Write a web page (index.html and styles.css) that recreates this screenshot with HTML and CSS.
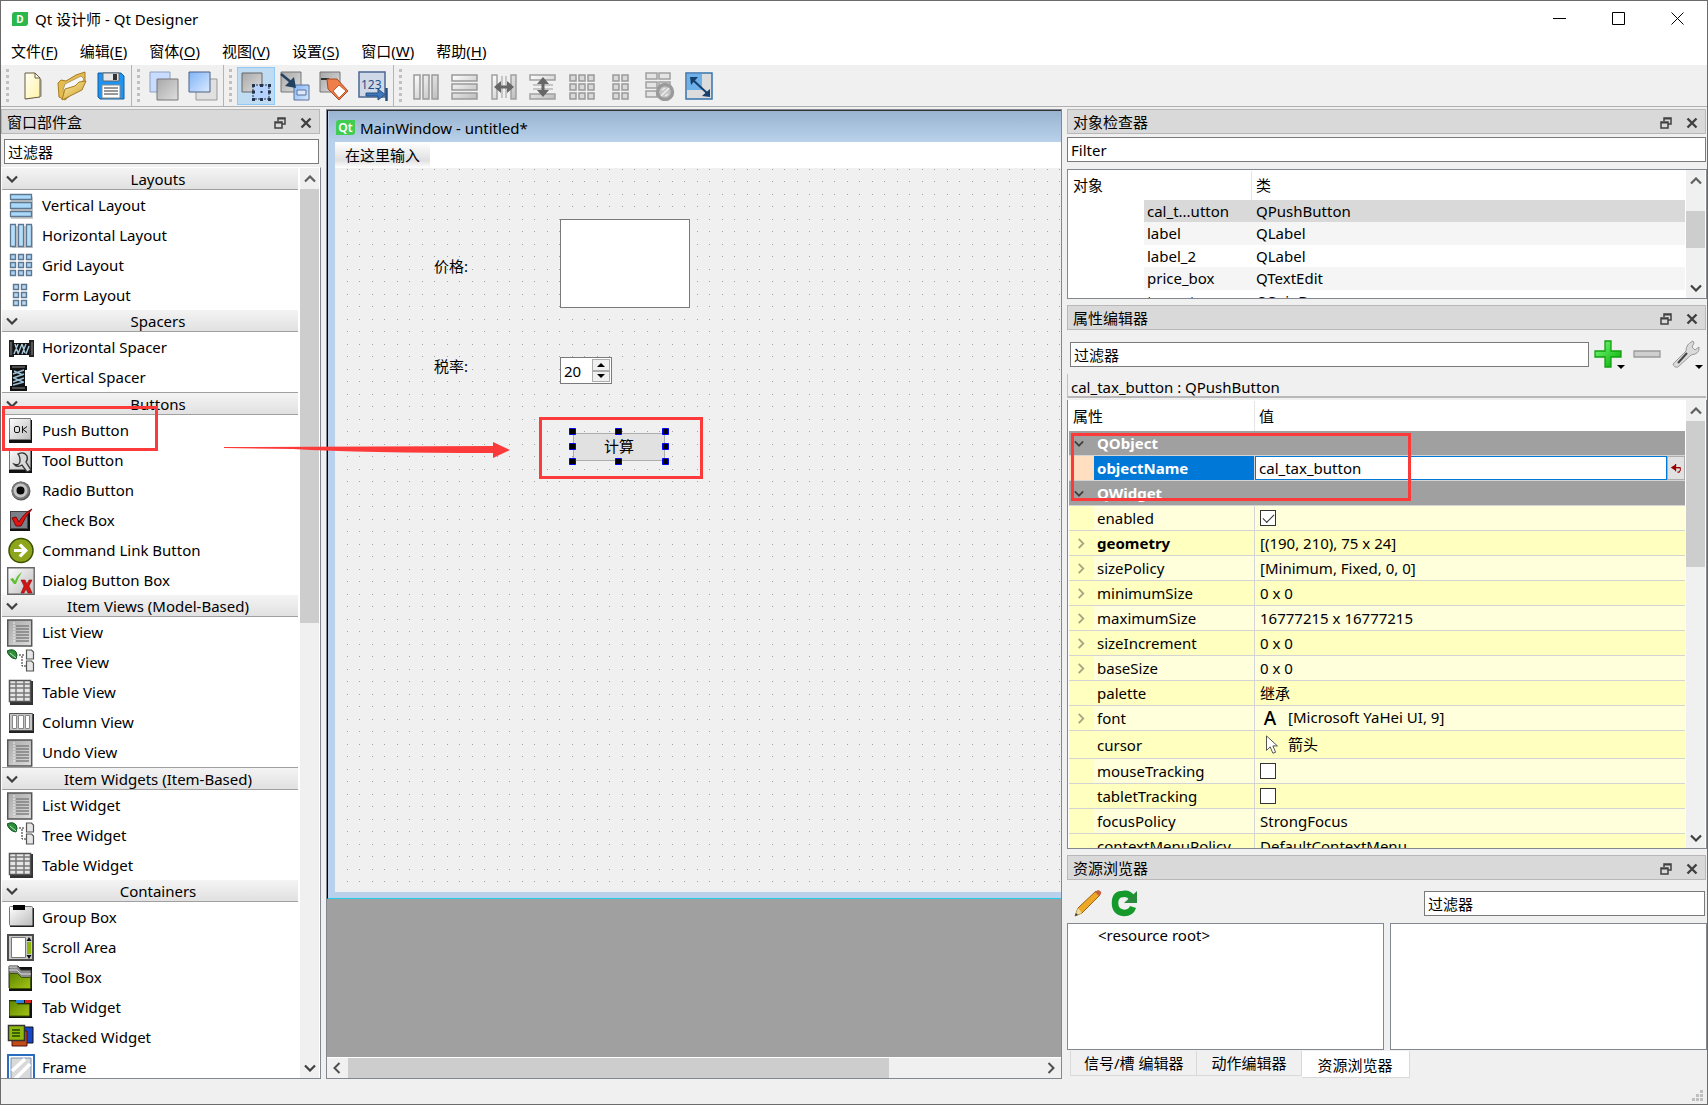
FILE: index.html
```html
<!DOCTYPE html>
<html lang="zh-CN">

<head>
    <meta charset="UTF-8">
    <title>Qt 设计师 - Qt Designer</title>
    <link rel="stylesheet" href="styles.css">
</head>

<body>
    <!-- Shared icon symbols -->
    <svg class="sprite" aria-hidden="true">
        <defs>
            <linearGradient id="g-blue" x1="0" y1="0" x2="1" y2="1">
                <stop offset="0" stop-color="#7fb4f7" />
                <stop offset="1" stop-color="#dbe9ff" />
            </linearGradient>
            <linearGradient id="g-grey" x1="0" y1="0" x2="1" y2="1">
                <stop offset="0" stop-color="#a8a8a8" />
                <stop offset="1" stop-color="#dedede" />
            </linearGradient>
            <linearGradient id="g-light" x1="0" y1="0" x2="1" y2="1">
                <stop offset="0" stop-color="#fdfdfd" />
                <stop offset="1" stop-color="#bdbdbd" />
            </linearGradient>
            <linearGradient id="g-green" x1="0" y1="0" x2="1" y2="1">
                <stop offset="0" stop-color="#5f8500" />
                <stop offset="1" stop-color="#a3c516" />
            </linearGradient>
            <linearGradient id="g-plus" x1="0" y1="0" x2="1" y2="1">
                <stop offset="0" stop-color="#7dff7d" />
                <stop offset="1" stop-color="#00a800" />
            </linearGradient>
            <linearGradient id="g-gold" x1="0" y1="0" x2="1" y2="1">
                <stop offset="0" stop-color="#fff0a0" />
                <stop offset="1" stop-color="#c99a2c" />
            </linearGradient>
            <linearGradient id="g-paper" x1="0" y1="0" x2="1" y2="1">
                <stop offset="0" stop-color="#fffff4" />
                <stop offset="1" stop-color="#fff3a6" />
            </linearGradient>
        </defs>
        <symbol id="chev-down" viewBox="0 0 12 8"><path d="M1 1.5l5 5 5-5" fill="none" stroke="#404040" stroke-width="2.2" /></symbol>
        <symbol id="chev-up" viewBox="0 0 12 8"><path d="M1 6.5l5-5 5 5" fill="none" stroke="#606060" stroke-width="2.2" /></symbol>
        <symbol id="chev-left" viewBox="0 0 8 12"><path d="M6.5 1l-5 5 5 5" fill="none" stroke="#505050" stroke-width="2" /></symbol>
        <symbol id="chev-right" viewBox="0 0 8 12"><path d="M1.5 1l5 5-5 5" fill="none" stroke="#505050" stroke-width="2" /></symbol>
        <symbol id="float" viewBox="0 0 12 12"><path d="M4 4V1h7v6H8M4 1.8h7M1 5h7v6H1zM1 5.8h7" fill="none" stroke="#404040" stroke-width="1.5" /></symbol>
        <symbol id="close" viewBox="0 0 12 12"><path d="M1.5 1.5l9 9M10.5 1.5l-9 9" stroke="#404040" stroke-width="2.4" /></symbol>

        <!-- toolbar -->
        <symbol id="new" viewBox="0 0 30 30"><path d="M8 3h10l6 6v16.500L8 28.500z" fill="#b9b9b9" /><path d="M7 2h10l5 5v19L7 28z" fill="url(#g-paper)" stroke="#6a5a3c" /><path d="M17 2v5h5z" fill="#fff" stroke="#6a5a3c" /></symbol>
        <symbol id="open" viewBox="0 0 30 30"><path d="M1 12l3-3 5 1 10-6 9-3v10L8 29l-6-3z" fill="#e4bb4f" stroke="#a87c22" /><path d="M6 19L8 13l16-8 3 3-5 8-15 7z" fill="#f6f6f6" stroke="#b09a68" /><path d="M5 29l3-11 10-3 4-4 7-1-4 9z" fill="url(#g-gold)" stroke="#a87c22" /></symbol>
        <symbol id="save" viewBox="0 0 30 30"><path d="M2 2h23l3 3v23H4l-2-2z" fill="#1d93f3" stroke="#155f9d" /><path d="M7 2h16v8H7z" fill="#e6e6e6" stroke="#666" /><path d="M17 3h4v6h-4z" fill="#333" /><path d="M6 14h18v13H6z" fill="#fff" stroke="#888" /><path d="M8 17h14M8 20h14M8 23h14" stroke="#777" stroke-width="1.300" /></symbol>
        <symbol id="back" viewBox="0 0 30 30"><path d="M1 1h20v20H1z" fill="#c8dcff" stroke="#8fa0bf" /><path d="M8 8h21v21H8z" fill="url(#g-grey)" stroke="#777" /></symbol>
        <symbol id="front" viewBox="0 0 30 30"><path d="M8 8h21v21H8z" fill="#e0e0e0" stroke="#999" /><path d="M1 1h21v20H1z" fill="url(#g-blue)" stroke="#4d6185" /></symbol>
        <symbol id="edit-widget" viewBox="0 0 30 30"><path d="M1 2h20v19H1z" fill="url(#g-grey)" stroke="#666" /><path d="M12 14h16v14H12z" fill="#b4d2fb" stroke="#24344f" stroke-dasharray="2 1" /><path d="M11 13h3v3h-3zM19 13h3v3h-3zM27 13h3v3h-3zM11 19.500h3v3h-3zM27 19.500h3v3h-3zM11 27h3v3h-3zM19 27h3v3h-3zM27 27h3v3h-3zM19.500 20h2v2h-2z" fill="#24344f" /></symbol>
        <symbol id="edit-signal" viewBox="0 0 30 30"><path d="M1 1h20v20H1z" fill="url(#g-grey)" stroke="#777" /><path d="M14 14h15v15H14z" fill="url(#g-blue)" stroke="#5b7396" /><path d="M17 19h9v5h-9z" fill="#dce8fa" stroke="#5b7396" /><path d="M1 3l11 9" stroke="#23405f" stroke-width="2.500" /><path d="M14 6l2 11-11-2z" fill="#23405f" /></symbol>
        <symbol id="edit-buddy" viewBox="0 0 30 30"><path d="M1 1h20v20H1z" fill="url(#g-grey)" stroke="#777" /><path d="M2 8h8" stroke="#333" stroke-width="2" /><path d="M8 8h10l11 12-9 9L9 18z" fill="#ef7f4a" stroke="#a54a22" /><path d="M20 14l7 6-7 7-6-7z" fill="#fff" stroke="#c95a24" /></symbol>
        <symbol id="lay-h" viewBox="0 0 30 30"><path d="M3 4h6v24H3zM12 4h6v24h-6zM21 4h6v24h-6z" fill="url(#g-light)" stroke="#9a9a9a" stroke-width="1.500" /></symbol>
        <symbol id="lay-v" viewBox="0 0 30 30"><path d="M2 4h25v6H2zM2 13h25v6H2zM2 22h25v6H2z" fill="url(#g-light)" stroke="#9a9a9a" stroke-width="1.500" /></symbol>
        <symbol id="split-h" viewBox="0 0 30 30"><path d="M3 4h5v24H3zM22 4h5v24h-5z" fill="url(#g-light)" stroke="#a0a0a0" stroke-width="1.500" /><path d="M13 5v22M17 5v22" stroke="#999" /><path d="M10 16h10" stroke="#666" stroke-width="3" /><path d="M12 10v12l-7-6zM18 10v12l7-6z" fill="#666" /></symbol>
        <symbol id="split-v" viewBox="0 0 30 30"><path d="M2 4h25v5H2zM2 23h25v5H2z" fill="url(#g-light)" stroke="#a0a0a0" stroke-width="1.500" /><path d="M5 14h20M5 18h20" stroke="#999" /><path d="M15 11v10" stroke="#666" stroke-width="3" /><path d="M9 13h12l-6-7zM9 19h12l-6 7z" fill="#666" /></symbol>
        <symbol id="lay-grid" viewBox="0 0 30 30"><path d="M3 4h6v6H3zM12 4h6v6h-6zM21 4h6v6h-6zM3 13h6v6H3zM12 13h6v6h-6zM21 13h6v6h-6zM3 22h6v6H3zM12 22h6v6h-6zM21 22h6v6h-6z" fill="#d9d9d9" stroke="#999" stroke-width="1.500" /></symbol>
        <symbol id="lay-form" viewBox="0 0 30 30"><path d="M7 4h6v6H7zM16 4h6v6h-6zM7 13h6v6H7zM16 13h6v6h-6zM7 22h6v6H7zM16 22h6v6h-6z" fill="#d9d9d9" stroke="#999" stroke-width="1.500" /></symbol>
        <symbol id="break" viewBox="0 0 30 30"><path d="M1 2h11v6H1zM14 2h11v6H14zM1 11h11v6H1zM14 11h11v6H14zM1 20h11v6H1z" fill="#e4e4e4" stroke="#a0a0a0" stroke-width="1.500" /><circle cx="20" cy="21" r="7.500" fill="#c4c4c4" stroke="#9a9a9a" stroke-width="3.500" /><path d="M16 25l8-8M17 19l3-2M20 25l3-2" stroke="#eee" stroke-width="1.500" /></symbol>
        <symbol id="adjust" viewBox="0 0 30 30"><path d="M2 2h26v26H2z" fill="#dcdcdc" stroke="#3573b1" stroke-width="1.500" /><path d="M3 3h15v16H3z" fill="#6db1ea" /><path d="M10 10l13 12" stroke="#17406d" stroke-width="2" /><path d="M6 6h8l-7 8zM26 26v-8l-8 7z" fill="#17406d" /></symbol>

        <!-- widget box -->
        <symbol id="w-vlay" viewBox="0 0 28 28"><path d="M4 5h22v22H4z" fill="#ccc" /><path d="M3.500 2.500h21v5h-21zM3.500 10.500h21v6h-21zM3.500 19.500h21v5h-21z" fill="#a9d9fb" stroke="#5d7791" stroke-width="1.300" /></symbol>
        <symbol id="w-hlay" viewBox="0 0 28 28"><path d="M5 4h21v22H5z" fill="#ccc" /><path d="M3.500 2.500h5v22h-5zM11.500 2.500h5v22h-5zM19.500 2.500h5v22h-5z" fill="#b5defb" stroke="#5d7791" stroke-width="1.300" /></symbol>
        <symbol id="w-grid" viewBox="0 0 28 28"><path d="M3.500 2.500h5v5h-5zM11.500 2.500h5v5h-5zM19.500 2.500h5v5h-5zM3.500 10.500h5v5h-5zM11.500 10.500h5v5h-5zM19.500 10.500h5v5h-5zM3.500 18.500h5v5h-5zM11.500 18.500h5v5h-5zM19.500 18.500h5v5h-5z" fill="#a9d2f5" stroke="#5d7791" stroke-width="1.400" /></symbol>
        <symbol id="w-form" viewBox="0 0 28 28"><path d="M6.500 2.500h5v5h-5zM14.500 2.500h5v5h-5zM6.500 10.500h5v5h-5zM14.500 10.500h5v5h-5zM6.500 18.500h5v5h-5zM14.500 18.500h5v5h-5z" fill="#b9d9f2" stroke="#5d7791" stroke-width="1.400" /></symbol>
        <symbol id="w-hspace" viewBox="0 0 28 28"><path d="M2 6h5v17H2zM22 6h5v17h-5z" fill="#222" /><path d="M6 9h16v12H6z" fill="#111" /><path d="M7 20l4-10M11 20l4-10M15 20l4-10M19 20l3-8M8 10l3 9M15 10l3 9" stroke="#a9c9dc" stroke-width="1.400" /><path d="M4 8v13M25 8v13" stroke="#8a8a8a" /></symbol>
        <symbol id="w-vspace" viewBox="0 0 28 28"><path d="M3 1h17v5H3zM3 22h17v5H3z" fill="#111" /><path d="M5 6h13v16H5z" fill="#111" /><path d="M6 10l11-4M6 14l11-4M6 18l11-4M6 21l11-3M7 7l9 4M7 14l9 4" stroke="#9cc0d6" stroke-width="1.400" /><path d="M5 3h13M5 24h13" stroke="#8a8a8a" /></symbol>
        <symbol id="w-push" viewBox="0 0 28 28"><path d="M2 3h23v23H2z" fill="#111" /><path d="M2.500 1.500h21v21h-21z" fill="url(#g-light)" stroke="#777" /><rect x="7.500" y="9.500" width="5" height="6" rx="1.500" fill="none" stroke="#111" stroke-width="1" /><path d="M15.500 9v7M20 9.500l-4 3 4 3" fill="none" stroke="#111" stroke-width="1" /></symbol>
        <symbol id="w-tool" viewBox="0 0 28 28"><path d="M2 3h23v23H2z" fill="#111" /><path d="M2.500 1.500h21v21h-21z" fill="url(#g-light)" stroke="#777" /><path d="M7 17q6 2 6-3t-2-7q6-3 9 2 1 4-1 6l5 8-4 2-5-7q-5 3-8-1z" fill="#d8d8d8" stroke="#333" stroke-width="1.300" /></symbol>
        <symbol id="w-radio" viewBox="0 0 28 28"><circle cx="14" cy="14" r="9.500" fill="#555" /><circle cx="13.500" cy="13.500" r="8" fill="#c4c4c4" stroke="#777" stroke-width="2" /><circle cx="13.500" cy="13.500" r="4" fill="#080808" /></symbol>
        <symbol id="w-check" viewBox="0 0 28 28"><path d="M3 4h20v20H3z" fill="#111" /><path d="M3.500 4.500h17v17h-17z" fill="#7b7f88" stroke="#444" /><path d="M5 11l4-1 3 5q5-9 13-13-7 8-11 17H9z" fill="#e01616" stroke="#7d0606" /></symbol>
        <symbol id="w-link" viewBox="0 0 28 28"><circle cx="14" cy="13.500" r="12" fill="#8ca51c" stroke="#3c5200" stroke-width="1.500" /><path d="M7 12h8L11.500 8.500l2.500-2 7 7-7 7-2.500-2L15 15H7z" fill="#fff" /></symbol>
        <symbol id="w-dialog" viewBox="0 0 28 28"><path d="M.7.700h26.500v26.500H.7z" fill="url(#g-light)" stroke="#666" stroke-width="1.400" /><path d="M3 12l3-1 2 3q2-6 7-9-4 6-6 12H7z" fill="#61c02e" /><path d="M14 13h4l2 4 2-4h3l-3 6 3 7h-4l-2-4-2 4h-3l3-7z" fill="#d01515" stroke="#8c1010" stroke-width=".6" /></symbol>
        <symbol id="w-list" viewBox="0 0 28 28"><path d="M.7 1h24v26H.7z" fill="url(#g-grey)" stroke="#555" stroke-width="1.500" /><path d="M7 3v22" stroke="#eee" stroke-dasharray="2 1" /><path d="M9 7h13M9 10h13M9 13h13M9 16h13M9 19h13M9 22h13" stroke="#808080" stroke-width="1.300" /></symbol>
        <symbol id="w-tree" viewBox="0 0 28 28"><path d="M0 2q6-3 9 1 2 3 0 7Q2 9 0 2z" fill="#2c8f3a" stroke="#145420" /><path d="M3 4l6 5" stroke="#bfe3bf" /><path d="M12 6h6M15 7v10h4" fill="none" stroke="#222" stroke-dasharray="2 1" /><path d="M19.500 1h5l2 2v7h-7zM19.500 12h5l2 2v8h-7z" fill="#e6e6e6" stroke="#555" stroke-width="1.200" /></symbol>
        <symbol id="w-table" viewBox="0 0 28 28"><path d="M3 2h23v24H3z" fill="#333" /><path d="M2.500 1.500h21v21h-21z" fill="#e5e5e5" stroke="#555" stroke-width="1.500" /><path d="M3 5h20M3 9h20M3 14h20M3 18h20M9 2v20M17 2v20" stroke="#777" stroke-width="1.500" /></symbol>
        <symbol id="w-column" viewBox="0 0 28 28"><path d="M2 5h25v19H2z" fill="#222" /><path d="M2.500 4.500h23v17h-23z" fill="#c4c4c4" stroke="#555" /><path d="M5.500 6.500h4v13h-4zM11.500 6.500h5v13h-5zM18.500 6.500h4v13h-4z" fill="#fff" stroke="#888" /></symbol>
        <symbol id="w-group" viewBox="0 0 28 28"><path d="M3 4h24v19H3z" fill="#222" /><rect x="2.500" y="2.500" width="23" height="19" rx="1" fill="url(#g-light)" stroke="#777" /><path d="M6 1h12v5H6z" fill="#050505" /></symbol>
        <symbol id="w-scroll" viewBox="0 0 28 28"><path d="M1 1h25v25H1z" fill="#c9c9c9" stroke="#4c4c4c" stroke-width="2" /><path d="M4.500 3.500h14v20h-14z" fill="#fff" stroke="#777" /><path d="M20 8h4v12h-4z" fill="#8fb50b" /><path d="M19.500 7l2.500-4 2.500 4zM19.500 21l2.500 4 2.500-4z" fill="#111" /></symbol>
        <symbol id="w-toolbox" viewBox="0 0 28 28"><path d="M2 3h23v24H2z" fill="#111" /><path d="M2 2h9l3 4h10v18H2z" fill="#8a8a8a" stroke="#333" /><path d="M2 6h8l4 4h10M2 3h8" stroke="#ddd" fill="none" /><path d="M2.500 9.500h8l4 4h9v11h-21z" fill="url(#g-green)" stroke="#3e5600" /></symbol>
        <symbol id="w-tab" viewBox="0 0 28 28"><path d="M2 6h23v18H2z" fill="#111" /><path d="M2.500 7h6l2 3h12v12h-20z" fill="url(#g-green)" stroke="#3e5600" /><path d="M9 6h8v3H9z" fill="#2c83e0" /><path d="M18 6h6v3h-6z" fill="#d22" /></symbol>
        <symbol id="w-stack" viewBox="0 0 28 28"><path d="M12 3h14v16H12z" fill="#1646c8" stroke="#111" /><path d="M5 7h15v15H5z" fill="#c34b16" stroke="#511" /><path d="M1.500 1.500h16v15h-16z" fill="#8fb80c" stroke="#333" stroke-width="1.500" /><path d="M5 6h8M5 9h8M5 12h8" stroke="#224400" stroke-width="1.300" /></symbol>
        <symbol id="w-frame" viewBox="0 0 28 28"><path d="M1 1h26v26H1z" fill="#fff" stroke="#2a6cc0" stroke-width="2" /><path d="M4 4h20v22H4z" fill="#d9d9d9" stroke="#7a94b4" /><path d="M5 17L18 5M8 25L23 10" stroke="#fff" stroke-width="3.500" /></symbol>

        <!-- property editor and resource browser -->
        <symbol id="plus" viewBox="0 0 28 28"><path d="M11 1h6v10h10v6H17v10h-6V17H1v-6h10z" fill="url(#g-plus)" stroke="#11a011" stroke-width="1.300" /></symbol>
        <symbol id="minus" viewBox="0 0 28 28"><path d="M1 11h26v6H1z" fill="#cfcfcf" stroke="#9a9a9a" stroke-width="1.300" /></symbol>
        <symbol id="wrench" viewBox="0 0 28 28"><path d="M1 24L14 11q0-7 7-10l1 2-2 4 3 3 4-3q1 7-8 8L6 27q-4 1-5-3z" fill="#dadada" stroke="#999" /><path d="M6 23l9-10" stroke="#444" stroke-width="2" /></symbol>
        <symbol id="pencil" viewBox="0 0 28 28"><path d="M1 27l3-8L22 2l4 4L8 24z" fill="#eea825" stroke="#9a6510" /><path d="M1 27l3-8 4 5z" fill="#ecd9a0" /><path d="M1 27l1-3 2 2z" fill="#333" /><path d="M21 3l3-2q4 1 3 4l-2 2z" fill="#c5613f" /></symbol>
        <symbol id="reload" viewBox="0 0 28 28"><path d="M23 18q-2 6-9 6-9-1-9-10t8-9q6-1 9 4" fill="none" stroke="#15992a" stroke-width="6.500" /><path d="M27 2v12H14z" fill="#2b8b3c" /></symbol>
        <symbol id="cursor" viewBox="0 0 14 22"><path d="M1.500 1v16l4-4 3 7 3-1-3-7h5z" fill="#fff" stroke="#444" /></symbol>
        <symbol id="reset" viewBox="0 0 12 12"><path d="M1 5h8M5 1v8M1 5l3-2v4z" stroke="#900" stroke-width="1.300" fill="#900" /><path d="M7 5h3q1 3-1 5H7" fill="none" stroke="#900" stroke-width="1.200" /></symbol>
    </svg>

    <header class="title-bar">
        <span class="app-logo">D</span>
        <h1>Qt 设计师 - Qt Designer</h1>
        <div class="win-buttons">
            <button type="button" aria-label="Minimize"><svg width="13" height="13"><path d="M0 6.500h13" stroke="#000" /></svg></button>
            <button type="button" aria-label="Maximize"><svg width="13" height="13"><path d="M.5.500h12v12H.5z" fill="none" stroke="#000" /></svg></button>
            <button type="button" aria-label="Close"><svg width="13" height="13"><path d="M.5.500l12 12M12.500.500l-12 12" stroke="#000" /></svg></button>
        </div>
    </header>

    <nav class="menu-bar">
        <button type="button">文件(<u>F</u>)</button>
        <button type="button">编辑(<u>E</u>)</button>
        <button type="button">窗体(<u>O</u>)</button>
        <button type="button">视图(<u>V</u>)</button>
        <button type="button">设置(<u>S</u>)</button>
        <button type="button">窗口(<u>W</u>)</button>
        <button type="button">帮助(<u>H</u>)</button>
    </nav>

    <div class="toolbar">
        <div class="tool-group">
            <button type="button" aria-label="New"><svg><use href="#new" /></svg></button>
            <button type="button" aria-label="Open"><svg><use href="#open" /></svg></button>
            <button type="button" aria-label="Save"><svg><use href="#save" /></svg></button>
        </div>
        <div class="tool-group">
            <button type="button" aria-label="Send to back"><svg><use href="#back" /></svg></button>
            <button type="button" aria-label="Bring to front"><svg><use href="#front" /></svg></button>
        </div>
        <div class="tool-group">
            <button type="button" class="active" aria-label="Edit widgets"><svg><use href="#edit-widget" /></svg></button>
            <button type="button" aria-label="Edit signals/slots"><svg><use href="#edit-signal" /></svg></button>
            <button type="button" aria-label="Edit buddies"><svg><use href="#edit-buddy" /></svg></button>
            <button type="button" aria-label="Edit tab order"><svg viewBox="0 0 30 30"><path d="M1 1h26v25H1z" fill="#cfd8e6" stroke="#4b6793" stroke-width="1.500" /><text x="3" y="18" class="icon-num">123</text><path d="M8 22h12v-4l7 5.500-7 5.500v-4H8z" fill="#3f77bd" stroke="#274f84" /><path d="M28.500 17v13" stroke="#274f84" stroke-width="2.500" /></svg></button>
        </div>
        <div class="tool-group last">
            <button type="button" aria-label="Lay out horizontally"><svg><use href="#lay-h" /></svg></button>
            <button type="button" aria-label="Lay out vertically"><svg><use href="#lay-v" /></svg></button>
            <button type="button" aria-label="Horizontal splitter"><svg><use href="#split-h" /></svg></button>
            <button type="button" aria-label="Vertical splitter"><svg><use href="#split-v" /></svg></button>
            <button type="button" aria-label="Lay out in grid"><svg><use href="#lay-grid" /></svg></button>
            <button type="button" aria-label="Lay out in form"><svg><use href="#lay-form" /></svg></button>
            <button type="button" aria-label="Break layout"><svg><use href="#break" /></svg></button>
            <button type="button" aria-label="Adjust size"><svg><use href="#adjust" /></svg></button>
        </div>
    </div>

    <main class="workspace">
        <!-- Widget box -->
        <section class="dock widget-box">
            <div class="dock-title">
                <h2>窗口部件盒</h2>
                <button type="button" aria-label="Float"><svg><use href="#float" /></svg></button>
                <button type="button" aria-label="Close"><svg><use href="#close" /></svg></button>
            </div>
            <input type="text" class="filter" value="过滤器" aria-label="过滤器">
            <div class="scroll-frame widget-frame">
                <div class="widget-list">
                    <h3><svg><use href="#chev-down" /></svg>Layouts</h3>
                    <ul>
                        <li><svg><use href="#w-vlay" /></svg>Vertical Layout</li>
                        <li><svg><use href="#w-hlay" /></svg>Horizontal Layout</li>
                        <li><svg><use href="#w-grid" /></svg>Grid Layout</li>
                        <li><svg><use href="#w-form" /></svg>Form Layout</li>
                    </ul>
                    <h3><svg><use href="#chev-down" /></svg>Spacers</h3>
                    <ul>
                        <li><svg><use href="#w-hspace" /></svg>Horizontal Spacer</li>
                        <li><svg><use href="#w-vspace" /></svg>Vertical Spacer</li>
                    </ul>
                    <h3 class="lined"><svg><use href="#chev-down" /></svg>Buttons</h3>
                    <ul>
                        <li><svg><use href="#w-push" /></svg>Push Button</li>
                        <li><svg><use href="#w-tool" /></svg>Tool Button</li>
                        <li><svg><use href="#w-radio" /></svg>Radio Button</li>
                        <li><svg><use href="#w-check" /></svg>Check Box</li>
                        <li><svg><use href="#w-link" /></svg>Command Link Button</li>
                        <li><svg><use href="#w-dialog" /></svg>Dialog Button Box</li>
                    </ul>
                    <h3><svg><use href="#chev-down" /></svg>Item Views (Model-Based)</h3>
                    <ul>
                        <li><svg><use href="#w-list" /></svg>List View</li>
                        <li><svg><use href="#w-tree" /></svg>Tree View</li>
                        <li><svg><use href="#w-table" /></svg>Table View</li>
                        <li><svg><use href="#w-column" /></svg>Column View</li>
                        <li><svg><use href="#w-list" /></svg>Undo View</li>
                    </ul>
                    <h3 class="lined"><svg><use href="#chev-down" /></svg>Item Widgets (Item-Based)</h3>
                    <ul>
                        <li><svg><use href="#w-list" /></svg>List Widget</li>
                        <li><svg><use href="#w-tree" /></svg>Tree Widget</li>
                        <li><svg><use href="#w-table" /></svg>Table Widget</li>
                    </ul>
                    <h3><svg><use href="#chev-down" /></svg>Containers</h3>
                    <ul>
                        <li><svg><use href="#w-group" /></svg>Group Box</li>
                        <li><svg><use href="#w-scroll" /></svg>Scroll Area</li>
                        <li><svg><use href="#w-toolbox" /></svg>Tool Box</li>
                        <li><svg><use href="#w-tab" /></svg>Tab Widget</li>
                        <li><svg><use href="#w-stack" /></svg>Stacked Widget</li>
                        <li><svg><use href="#w-frame" /></svg>Frame</li>
                    </ul>
                </div>
                <div class="scrollbar">
                    <button type="button" aria-label="Scroll up"><svg><use href="#chev-up" /></svg></button>
                    <div class="track"><div class="thumb thumb-widgets"></div></div>
                    <button type="button" aria-label="Scroll down"><svg><use href="#chev-down" /></svg></button>
                </div>
            </div>
        </section>

        <!-- Form being edited -->
        <section class="mdi">
            <div class="form-window">
                <div class="form-title"><span class="qt-logo">Qt</span>MainWindow - untitled*</div>
                <div class="form-body">
                    <div class="form-menu"><button type="button">在这里输入</button></div>
                    <div class="canvas">
                        <label class="node price-label" for="price_box">价格:</label>
                        <textarea class="node price-box" id="price_box"></textarea>
                        <label class="node tax-label" for="tax_rate">税率:</label>
                        <div class="node spin-box">
                            <input type="text" id="tax_rate" value="20">
                            <div class="spin-buttons">
                                <button type="button" aria-label="Up"><svg width="8" height="4"><path d="M0 4l4-4 4 4z" /></svg></button>
                                <button type="button" aria-label="Down"><svg width="8" height="4"><path d="M0 0l4 4 4-4z" /></svg></button>
                            </div>
                        </div>
                        <button type="button" class="node calc-button">计算</button>
                        <svg class="node handles" width="104" height="40">
                            <path d="M1.500 1.500h6v6h-6zM47.500 1.500h6v6h-6zM94.500 1.500h6v6h-6zM1.500 16.500h6v6h-6zM94.500 16.500h6v6h-6zM1.500 31.500h6v6h-6zM47.500 31.500h6v6h-6zM94.500 31.500h6v6h-6z" stroke="#00f" />
                        </svg>
                    </div>
                </div>
            </div>
            <div class="mdi-space"></div>
            <div class="scrollbar horizontal">
                <button type="button" aria-label="Scroll left"><svg><use href="#chev-left" /></svg></button>
                <div class="track"><div class="thumb thumb-form"></div></div>
                <button type="button" aria-label="Scroll right"><svg><use href="#chev-right" /></svg></button>
            </div>
        </section>

        <div class="right-docks">
            <!-- Object inspector -->
            <section class="dock inspector">
                <div class="dock-title">
                    <h2>对象检查器</h2>
                    <button type="button" aria-label="Float"><svg><use href="#float" /></svg></button>
                    <button type="button" aria-label="Close"><svg><use href="#close" /></svg></button>
                </div>
                <input type="text" class="filter" value="Filter" aria-label="Filter">
                <div class="scroll-frame">
                    <div class="table-view">
                        <table class="objects">
                            <colgroup><col class="col-indent"><col class="col-object"><col></colgroup>
                            <thead>
                                <tr><th colspan="2">对象</th><th>类</th></tr>
                            </thead>
                            <tbody>
                                <tr class="selected"><td></td><td>cal_t...utton</td><td>QPushButton</td></tr>
                                <tr><td></td><td>label</td><td>QLabel</td></tr>
                                <tr><td></td><td>label_2</td><td>QLabel</td></tr>
                                <tr><td></td><td>price_box</td><td>QTextEdit</td></tr>
                                <tr><td></td><td>tax_rate</td><td>QSpinBox</td></tr>
                            </tbody>
                        </table>
                    </div>
                    <div class="scrollbar">
                        <button type="button" aria-label="Scroll up"><svg><use href="#chev-up" /></svg></button>
                        <div class="track"><div class="thumb thumb-objects"></div></div>
                        <button type="button" aria-label="Scroll down"><svg><use href="#chev-down" /></svg></button>
                    </div>
                </div>
            </section>

            <!-- Property editor -->
            <section class="dock properties">
                <div class="dock-title">
                    <h2>属性编辑器</h2>
                    <button type="button" aria-label="Float"><svg><use href="#float" /></svg></button>
                    <button type="button" aria-label="Close"><svg><use href="#close" /></svg></button>
                </div>
                <div class="property-tools">
                    <input type="text" class="filter" value="过滤器" aria-label="过滤器">
                    <button type="button" class="drop" aria-label="Add"><svg><use href="#plus" /></svg></button>
                    <button type="button" aria-label="Remove"><svg><use href="#minus" /></svg></button>
                    <button type="button" class="drop" aria-label="Configure"><svg><use href="#wrench" /></svg></button>
                </div>
                <p class="object-line">cal_tax_button : QPushButton</p>
                <div class="scroll-frame open-top">
                    <div class="table-view">
                        <table class="props">
                            <colgroup><col class="col-twist"><col class="col-prop"><col></colgroup>
                            <thead>
                                <tr><th colspan="2">属性</th><th>值</th></tr>
                            </thead>
                            <tbody>
                                <tr class="group"><td><svg><use href="#chev-down" /></svg></td><td colspan="2">QObject</td></tr>
                                <tr class="editing"><td></td><td>objectName</td>
                                    <td>
                                        <div class="editor"><input type="text" value="cal_tax_button" aria-label="objectName"><button type="button" aria-label="Reset"><svg><use href="#reset" /></svg></button></div>
                                    </td>
                                </tr>
                                <tr class="group"><td><svg><use href="#chev-down" /></svg></td><td colspan="2">QWidget</td></tr>
                                <tr><td></td><td><label for="enabled">enabled</label></td><td><input type="checkbox" id="enabled" checked></td></tr>
                                <tr><td><svg class="twist"><use href="#chev-right" /></svg></td><td><b>geometry</b></td><td>[(190, 210), 75 x 24]</td></tr>
                                <tr><td><svg class="twist"><use href="#chev-right" /></svg></td><td>sizePolicy</td><td>[Minimum, Fixed, 0, 0]</td></tr>
                                <tr><td><svg class="twist"><use href="#chev-right" /></svg></td><td>minimumSize</td><td>0 x 0</td></tr>
                                <tr><td><svg class="twist"><use href="#chev-right" /></svg></td><td>maximumSize</td><td>16777215 x 16777215</td></tr>
                                <tr><td><svg class="twist"><use href="#chev-right" /></svg></td><td>sizeIncrement</td><td>0 x 0</td></tr>
                                <tr><td><svg class="twist"><use href="#chev-right" /></svg></td><td>baseSize</td><td>0 x 0</td></tr>
                                <tr><td></td><td>palette</td><td>继承</td></tr>
                                <tr><td><svg class="twist"><use href="#chev-right" /></svg></td><td>font</td><td><span class="value-icon font-icon">A</span>[Microsoft YaHei UI, 9]</td></tr>
                                <tr class="tall"><td></td><td>cursor</td><td><span class="value-icon"><svg class="cursor-icon"><use href="#cursor" /></svg></span>箭头</td></tr>
                                <tr><td></td><td><label for="mouse">mouseTracking</label></td><td><input type="checkbox" id="mouse"></td></tr>
                                <tr><td></td><td><label for="tablet">tabletTracking</label></td><td><input type="checkbox" id="tablet"></td></tr>
                                <tr><td></td><td>focusPolicy</td><td>StrongFocus</td></tr>
                                <tr><td></td><td>contextMenuPolicy</td><td>DefaultContextMenu</td></tr>
                            </tbody>
                        </table>
                    </div>
                    <div class="scrollbar">
                        <button type="button" aria-label="Scroll up"><svg><use href="#chev-up" /></svg></button>
                        <div class="track"><div class="thumb thumb-props"></div></div>
                        <button type="button" aria-label="Scroll down"><svg><use href="#chev-down" /></svg></button>
                    </div>
                </div>
            </section>

            <!-- Resource browser -->
            <section class="dock resources">
                <div class="dock-title">
                    <h2>资源浏览器</h2>
                    <button type="button" aria-label="Float"><svg><use href="#float" /></svg></button>
                    <button type="button" aria-label="Close"><svg><use href="#close" /></svg></button>
                </div>
                <div class="resource-tools">
                    <button type="button" aria-label="Edit resources"><svg><use href="#pencil" /></svg></button>
                    <button type="button" aria-label="Reload"><svg><use href="#reload" /></svg></button>
                    <input type="text" class="filter" value="过滤器" aria-label="过滤器">
                </div>
                <div class="panes">
                    <div class="pane">&lt;resource root&gt;</div>
                    <div class="pane"></div>
                </div>
                <div class="tabs">
                    <button type="button">信号/槽 编辑器</button>
                    <button type="button">动作编辑器</button>
                    <button type="button" class="current">资源浏览器</button>
                </div>
            </section>
        </div>
    </main>

    <footer class="status-bar">
        <svg width="12" height="12"><path d="M8 0h3v3H8zM4 4h3v3H4zM8 4h3v3H8zM0 8h3v3H0zM4 8h3v3H4zM8 8h3v3H8z" fill="#bfbfbf" /></svg>
    </footer>

    <!-- Red marks drawn over the window -->
    <div class="mark mark-push"></div>
    <div class="mark mark-calc"></div>
    <div class="mark mark-name"></div>
    <svg class="mark-arrow" width="286" height="18"><path d="M0 6l269-1V1l17 8-17 8v-5q-130 0-200-4L0 7z" fill="#fd3a3a" /></svg>
</body>

</html>
```

FILE: styles.css
```css
* {
    box-sizing: border-box;
}

body {
    background-color: #f0f0f0;
    border: 1px solid #6b6b6b;
    color: #000;
    display: flex;
    flex-direction: column;
    font-family: "Noto Sans", "Noto Sans CJK SC", sans-serif;
    font-size: 15px;
    height: 100vh;
    line-height: 20px;
    margin: 0;
    overflow: hidden;
    position: relative;
}

h1,
h2,
h3,
p,
ul {
    font-size: 15px;
    font-weight: normal;
    list-style: none;
    margin: 0;
    padding: 0;
}

button,
input,
textarea {
    border-radius: 0;
    color: #000;
    font: inherit;
    margin: 0;
    outline: none;
}

button {
    align-items: center;
    background: none;
    border: none;
    display: flex;
    justify-content: center;
    padding: 0;
}

svg {
    display: block;
    flex: none;
}

.sprite {
    height: 0;
    position: absolute;
    width: 0;
}

.icon-num {
    fill: #1f4f86;
    font-size: 12px;
}

/* title and menu */
.title-bar {
    align-items: center;
    background-color: #fff;
    display: flex;
    height: 37px;
    padding: 0 0 2px 11px;
}

.app-logo {
    background-color: #2bb84a;
    border-radius: 3px 0 3px 0;
    color: #fff;
    font-size: 10px;
    font-weight: bold;
    height: 14px;
    line-height: 14px;
    margin-right: 7px;
    text-align: center;
    width: 16px;
}

.win-buttons {
    display: flex;
    margin-left: auto;
}

.win-buttons button {
    height: 35px;
    width: 59px;
}

.menu-bar {
    background-color: #fff;
    display: flex;
    gap: 22px;
    height: 27px;
    padding: 0 0 2px 10px;
}

.menu-bar u {
    text-underline-offset: 2px;
}

/* toolbar */
.toolbar {
    border-bottom: 1px solid #b0b0b0;
    display: flex;
    height: 42px;
}

.tool-group {
    align-items: center;
    border-right: 1px solid #b4b4b4;
    display: flex;
    gap: 1px;
    padding: 0 1px 0 5px;
}

.tool-group.last {
    border-right: none;
}

.tool-group::before {
    border-left: 3px dotted #c0c0c0;
    content: "";
    height: 33px;
    margin-right: 4px;
}

.tool-group button {
    border: 1px solid transparent;
    height: 38px;
    width: 38px;
}

.tool-group button.active {
    background-color: #c0dcf3;
    border-color: #90c8f6;
}

.tool-group svg {
    height: 30px;
    width: 30px;
}

/* docks */
.workspace {
    display: flex;
    flex: 1;
    min-height: 0;
    padding-top: 2px;
}

.dock {
    display: flex;
    flex-direction: column;
    min-height: 0;
}

.dock-title {
    align-items: center;
    background-color: #d9d9d9;
    border: 1px solid #b8b8b8;
    display: flex;
    flex: none;
    gap: 14px;
    height: 25px;
    padding: 0 7px 0 5px;
}

.dock-title h2 {
    flex: 1;
}

.dock-title svg {
    height: 12px;
    margin-top: 2px;
    width: 12px;
}

.filter {
    background-color: #fff;
    border: 1px solid #7a7a7a;
    flex: none;
    height: 25px;
    padding: 0 3px;
}

.scroll-frame {
    background-color: #fff;
    border: 1px solid #828790;
    display: flex;
    flex: 1;
    min-height: 0;
}

.scrollbar {
    background-color: #f0f0f0;
    display: flex;
    flex: none;
    flex-direction: column;
    width: 19px;
}

.scrollbar button {
    flex: none;
    height: 21px;
}

.scrollbar svg {
    height: 8px;
    width: 12px;
}

.scrollbar .track {
    flex: 1;
}

.thumb {
    background-color: #cdcdcd;
}

.scrollbar.horizontal {
    border-top: 1px solid #fff;
    flex-direction: row;
    height: 21px;
    width: auto;
}

.scrollbar.horizontal button {
    height: auto;
    width: 20px;
}

.scrollbar.horizontal svg {
    height: 14px;
    width: 8px;
}

.thumb-widgets {
    height: 50%;
}

.thumb-form {
    height: 100%;
    margin-left: 1px;
    width: 78%;
}

.thumb-objects {
    height: 37px;
    margin-top: 20px;
}

.thumb-props {
    height: 36%;
}

/* widget box */
.widget-box {
    width: 320px;
}

.widget-box .dock-title {
    margin-right: 1px;
}

.widget-box .filter {
    margin: 5px 2px 3px 3px;
}

.widget-frame {
    border-left: none;
    border-top-color: #fff;
}

.scroll-frame .scrollbar {
    margin-right: 1px;
}

.widget-list {
    flex: 1;
    margin-right: 2px;
    overflow: hidden;
    padding-left: 1px;
}

.widget-list h3 {
    align-items: center;
    background: linear-gradient(#f4f4f4, #e1e1e1);
    border-bottom: 1px solid #a0a0a0;
    display: flex;
    height: 22px;
    justify-content: center;
    padding-left: 4px;
}

.widget-list h3.lined {
    border-top: 1px solid #a0a0a0;
    height: 23px;
}

.widget-list h3 svg {
    height: 8px;
    margin-right: auto;
    width: 12px;
}

.widget-list h3::after {
    content: "";
    margin-left: auto;
}

.widget-list li {
    align-items: center;
    display: flex;
    gap: 7px;
    height: 30px;
    padding-left: 5px;
}

.widget-list li svg {
    height: 28px;
    margin-top: 2px;
    width: 28px;
}

/* form window */
.mdi {
    background-color: #a0a0a0;
    border: 1px solid #828790;
    display: flex;
    flex: 1;
    flex-direction: column;
    margin: 0 5px;
    min-width: 0;
}

.mdi-space {
    flex: 1;
}

.form-window {
    background-color: #b9d1ea;
    border-bottom: 1px solid #27cde6;
    border-left: 1px solid #000;
    border-top: 1px solid #333;
    height: 789px;
    padding: 0 0 6px 7px;
}

.form-title {
    align-items: center;
    background: linear-gradient(#99b4d1, #b9d1ea);
    display: flex;
    gap: 5px;
    height: 31px;
    margin-left: -6px;
    padding: 2px 0 0 7px;
}

.qt-logo {
    background-color: #41cd52;
    border-radius: 3px 0 3px 0;
    color: #fff;
    font-size: 12px;
    font-weight: 600;
    height: 15px;
    line-height: 15px;
    text-align: center;
    width: 19px;
}

.form-body {
    display: flex;
    flex-direction: column;
    height: 750px;
}

.form-menu {
    background-color: #fff;
    height: 26px;
}

.form-menu button {
    background: linear-gradient(#fff, #e0e0e0 70%, #fff);
    height: 26px;
    padding: 0 10px;
}

.canvas {
    background-color: #f0f0f0;
    background-image:
        linear-gradient(#f0f0f0 1px, transparent 1px, transparent 2px, #f0f0f0 2px, #f0f0f0 13px, transparent 13px, transparent 14px, #f0f0f0 14px),
        linear-gradient(90deg, #f0f0f0 12px, #a0a0a0 12px, #a0a0a0 13px, #f0f0f0 13px, #f0f0f0 24px, #a0a0a0 24px);
    background-size: 25px 25px;
    flex: 1;
    position: relative;
}

.node {
    position: absolute;
}

.price-label {
    left: 99px;
    top: 88px;
}

.tax-label {
    left: 99px;
    top: 188px;
}

.price-box {
    background-color: #fff;
    border: 1px solid #7a7a7a;
    height: 89px;
    left: 225px;
    resize: none;
    top: 51px;
    width: 130px;
}

.spin-box {
    background-color: #fff;
    border: 1px solid #7a7a7a;
    display: flex;
    height: 27px;
    left: 225px;
    padding: 1px;
    top: 189px;
    width: 52px;
}

.spin-box input {
    border: none;
    flex: 1;
    min-width: 0;
    padding: 0 2px;
}

.spin-buttons {
    display: flex;
    flex-direction: column;
    width: 18px;
}

.spin-buttons button {
    background-color: #f0f0f0;
    border: 1px solid #adadad;
    flex: 1;
}

.calc-button {
    background-color: #e1e1e1;
    border: 1px solid #adadad;
    height: 28px;
    left: 238px;
    padding-bottom: 2px;
    top: 265px;
    width: 92px;
}

.handles {
    left: 233px;
    top: 259px;
}

/* right column */
.right-docks {
    display: flex;
    flex-direction: column;
    gap: 6px;
    width: 640px;
}

.right-docks .dock-title {
    margin-right: 1px;
}

.inspector {
    height: 190px;
}

.inspector .filter {
    margin: 3px 1px 7px 0;
}

.table-view {
    flex: 1;
    overflow: hidden;
    padding: 1px 1px 0;
}

table {
    border-collapse: separate;
    border-spacing: 0;
    table-layout: fixed;
    width: 100%;
}

th {
    font-weight: normal;
    height: 30px;
    padding: 0 4px;
    text-align: left;
}

th + th {
    border-left: 1px solid #e5e5e5;
}

td {
    overflow: hidden;
    padding: 0 3px;
    white-space: nowrap;
}

.col-indent {
    width: 75px;
}

.col-object {
    width: 107px;
}

.objects th {
    height: 29px;
    padding-bottom: 1px;
}

.objects td {
    height: 22px;
    padding-bottom: 1px;
}

.objects tr:nth-child(even) td {
    height: 23px;
}

.objects td:last-child {
    padding-left: 5px;
}

.objects tr:nth-child(even) td + td {
    background-color: #f5f5f5;
}

.objects tr.selected td + td {
    background-color: #d9d9d9;
}

.properties {
    flex: 1;
}

.property-tools {
    display: flex;
    gap: 11px;
    margin: 8px 7px 5px 3px;
    padding-top: 1px;
}

.property-tools .filter {
    flex: 1;
    margin-right: -6px;
    margin-top: 3px;
}

.property-tools button {
    height: 30px;
    position: relative;
    width: 28px;
}

.property-tools button svg {
    height: 28px;
    width: 28px;
}

.property-tools .drop::after {
    border: 4px solid transparent;
    border-bottom: none;
    border-top-color: #000;
    bottom: 0;
    content: "";
    position: absolute;
    right: -3px;
}

.object-line {
    border-bottom: 2px solid #b8b8b8;
    border-left: 1px solid #c0c0c0;
    height: 24px;
    line-height: 26px;
    margin: 0 1px 2px 0;
    padding-left: 3px;
}

.open-top {
    border-top: none;
}

.col-twist {
    width: 25px;
}

.col-prop {
    width: 160px;
}

.props td {
    background-color: #ffffdc;
    border-bottom: 1px solid #d4d4d4;
    height: 25px;
}

.props tr:nth-child(odd) td,
.props td:first-child {
    background-color: #ffffbf;
}

.props td:first-child {
    padding: 0 0 0 8px;
}

.props td:last-child {
    border-left: 1px solid #d4d4d4;
    padding-left: 5px;
}

.props .tall td {
    height: 28px;
}

.props tr.group td {
    background-color: #a0a0a0;
    border-left: none;
    color: #fff;
    font-weight: bold;
    padding-left: 3px;
}

.props tr.group td:first-child {
    padding-left: 5px;
}

.props .group svg {
    height: 7px;
    width: 10px;
}

.props tr.editing td {
    background-color: #0078d7;
    color: #fff;
    font-weight: bold;
}

.props tr.editing td:first-child {
    background-color: #ffdfbf;
}

.props tr.editing td:last-child {
    background-color: #fff;
    padding: 0;
}

.twist {
    height: 11px;
    opacity: 0.5;
    width: 8px;
}

.editor {
    display: flex;
    height: 24px;
}

.editor input {
    border: 1px solid #0078d7;
    flex: 1;
    font-weight: normal;
    min-width: 0;
    padding: 0 3px;
}

.editor button {
    background-color: #e1e1e1;
    border: 1px solid #adadad;
    width: 18px;
}

.editor svg {
    height: 11px;
    width: 11px;
}

.props input[type="checkbox"] {
    appearance: none;
    background-color: #fff;
    border: 1px solid #333;
    display: block;
    height: 16px;
    width: 16px;
}

.props input[type="checkbox"]:checked::before {
    border: solid #333;
    border-width: 0 0 1px 1px;
    content: "";
    display: block;
    height: 5px;
    margin: 3px 2px;
    transform: rotate(-45deg);
    width: 10px;
}

.value-icon {
    display: inline-block;
    margin-right: 8px;
    vertical-align: middle;
    width: 20px;
}

.font-icon {
    font-size: 19px;
    font-weight: 500;
    line-height: 22px;
    text-align: center;
}

.cursor-icon {
    height: 20px;
    margin-left: 5px;
    width: 13px;
}

/* resource browser */
.resource-tools {
    align-items: center;
    display: flex;
    gap: 8px;
    height: 43px;
    padding: 3px 2px 0 7px;
}

.resource-tools svg {
    height: 28px;
    width: 28px;
}

.resource-tools .filter {
    margin-left: auto;
    width: 281px;
}

.panes {
    display: flex;
    gap: 6px;
    height: 127px;
}

.pane {
    background-color: #fff;
    border: 1px solid #828790;
    flex: 1;
    padding: 1px 30px;
}

.tabs {
    align-items: flex-start;
    display: flex;
    height: 29px;
    padding: 1px 3px 0;
}

.tabs button {
    border: 1px solid #d9d9d9;
    border-top: none;
    height: 25px;
    padding: 0 13px;
}

.tabs button + button {
    border-left: none;
    padding: 0 14px;
}

.tabs button.current {
    background-color: #fff;
    height: 27px;
    padding: 2px 16px 0;
}

.status-bar {
    display: flex;
    height: 25px;
    justify-content: flex-end;
    padding: 11px 3px 0;
}

/* red marks */
.mark {
    border: 3px solid #fd3a3a;
    pointer-events: none;
    position: absolute;
}

.mark-push {
    height: 45px;
    left: 1px;
    top: 405px;
    width: 156px;
}

.mark-calc {
    height: 62px;
    left: 538px;
    top: 416px;
    width: 164px;
}

.mark-name {
    height: 68px;
    right: 296px;
    top: 432px;
    width: 340px;
}

.mark-arrow {
    left: 223px;
    pointer-events: none;
    position: absolute;
    top: 440px;
}
```
